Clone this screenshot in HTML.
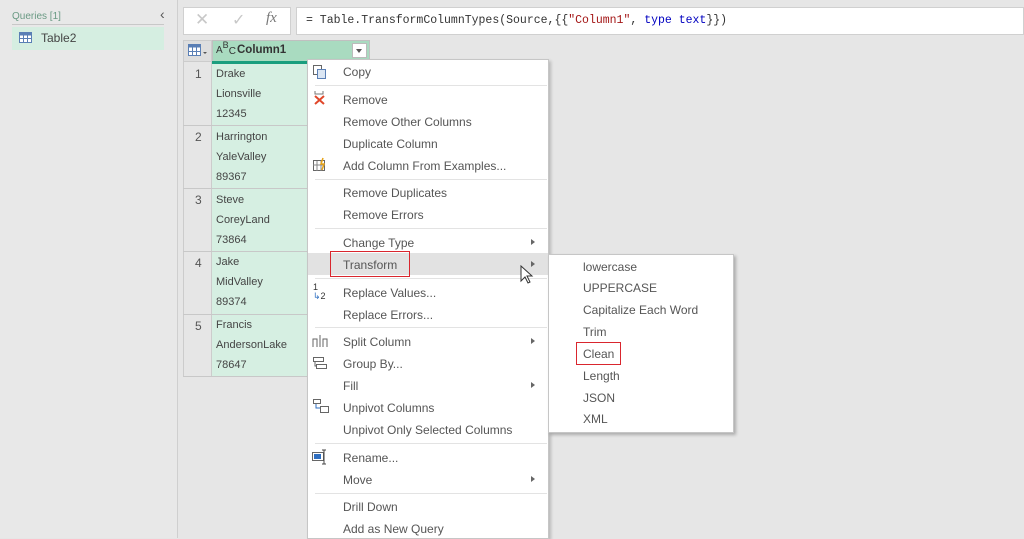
<!DOCTYPE html>
<html><head><style>
*{margin:0;padding:0;box-sizing:border-box}
body{width:1024px;height:538px;overflow:hidden;background:#e6e6e6;font-family:"Liberation Sans",sans-serif;font-size:12px;color:#444;position:relative}
.a{position:absolute}
.mi{position:absolute;left:343px;color:#555;font-size:12px;line-height:14px}
.sep{position:absolute;left:315px;width:232px;height:1px;background:#e3e3e3}
.arr{position:absolute;left:531px;width:0;height:0;border-left:4px solid #666;border-top:3.5px solid transparent;border-bottom:3.5px solid transparent}
.si{position:absolute;left:583px;color:#555;font-size:12px;line-height:14px}
.cell{position:absolute;left:216px;font-size:11px;color:#444}
.idx{position:absolute;left:195px;font-size:12px;color:#555}
</style></head><body>
<!-- left panel -->
<div class="a" style="left:0;top:0;width:178px;height:538px;background:#e8e8e8;border-right:1px solid #cfcfcf"></div>
<div class="a" style="left:12px;top:11px;font-size:10px;color:#6a9a84">Queries [1]</div>
<div class="a" style="left:12px;top:24px;width:152px;height:1px;background:#c8c8c8"></div>
<div class="a" style="left:160px;top:6px;font-size:14px;color:#555">&#8249;</div>
<div class="a" style="left:12px;top:27px;width:152px;height:23px;background:#d5eee1"></div>
<svg class="a" style="left:19px;top:32px" width="13" height="11"><rect x="0.5" y="0.5" width="12" height="10" fill="#fff" stroke="#5a7fb5"/><rect x="0.5" y="0.5" width="12" height="3" fill="#5a7fb5"/><path d="M4.5 3v8M8.5 3v8M0 6.5h13" stroke="#5a7fb5"/></svg>
<div class="a" style="left:41px;top:31px;font-size:12px;color:#444">Table2</div>
<!-- formula bar -->
<div class="a" style="left:183px;top:7px;width:108px;height:28px;background:#fff;border:1px solid #d0d0d0"></div>
<div class="a" style="left:195px;top:10px;font-size:17px;color:#c8c8c8">&#10005;</div>
<div class="a" style="left:232px;top:10px;font-size:16px;color:#c8c8c8">&#10003;</div>
<div class="a" style="left:266px;top:10px;font-size:15px;color:#777;font-family:'Liberation Serif',serif;font-style:italic">fx</div>
<div class="a" style="left:296px;top:7px;width:728px;height:28px;background:#fff;border:1px solid #d0d0d0"></div>
<div class="a" style="left:306px;top:14px;font-family:'Liberation Mono',monospace;font-size:11.5px;color:#333">= Table.TransformColumnTypes(Source,{{<span style="color:#a31515">"Column1"</span>, <span style="color:#0000c0">type text</span>}})</div>
<!-- table header -->
<div class="a" style="left:183px;top:40px;width:29px;height:22px;background:#dedede;border:1px solid #ccc"></div>
<svg class="a" style="left:188px;top:44px" width="22" height="13"><rect x="0.5" y="0.5" width="12" height="11" fill="#fff" stroke="#5a7fb5"/><rect x="0.5" y="0.5" width="12" height="3" fill="#5a7fb5"/><path d="M4.5 3v9M8.5 3v9M0 7.5h13" stroke="#5a7fb5"/><path d="M15 8l2 2 2-2z" fill="#555"/></svg>
<div class="a" style="left:212px;top:40px;width:158px;height:22px;background:#a9dbc0;border:1px solid #c0c0c0"></div>
<div class="a" style="left:216px;top:41px;font-size:10px;color:#333"><span style="position:relative;top:4px">A</span><span style="position:relative;top:-1px;font-size:9px">B</span><span style="position:relative;top:5px">C</span></div>
<div class="a" style="left:237px;top:44px;font-weight:bold;font-size:11.5px;color:#333">Column1</div>
<div class="a" style="left:352px;top:43px;width:15px;height:15px;background:#fff;border:1px solid #bbb"></div>
<div class="a" style="left:356px;top:49px;border-top:4px solid #555;border-left:3.5px solid transparent;border-right:3.5px solid transparent"></div>
<div class="a" style="left:212px;top:61px;width:97px;height:3px;background:#1a9e7e"></div>
<!-- table body -->
<div class="a" style="left:183px;top:62px;width:29px;height:315px;background:#e6e6e6;border-left:1px solid #ccc;border-right:1px solid #ccc"></div>
<div class="a" style="left:212px;top:64px;width:97px;height:313px;background:#d6efe2;border-bottom:1px solid #ccc"></div>
<div class="a" style="left:183px;top:125px;width:126px;height:1px;background:#c8c8c8"></div>
<div class="a" style="left:183px;top:188px;width:126px;height:1px;background:#c8c8c8"></div>
<div class="a" style="left:183px;top:251px;width:126px;height:1px;background:#c8c8c8"></div>
<div class="a" style="left:183px;top:314px;width:126px;height:1px;background:#c8c8c8"></div>
<div class="a" style="left:183px;top:376px;width:126px;height:1px;background:#c8c8c8"></div>
<div class="idx" style="top:67px">1</div><div class="cell" style="top:68px">Drake</div><div class="cell" style="top:88px">Lionsville</div><div class="cell" style="top:108px">12345</div>
<div class="idx" style="top:130px">2</div><div class="cell" style="top:131px">Harrington</div><div class="cell" style="top:151px">YaleValley</div><div class="cell" style="top:171px">89367</div>
<div class="idx" style="top:193px">3</div><div class="cell" style="top:194px">Steve</div><div class="cell" style="top:214px">CoreyLand</div><div class="cell" style="top:234px">73864</div>
<div class="idx" style="top:256px">4</div><div class="cell" style="top:256px">Jake</div><div class="cell" style="top:276px">MidValley</div><div class="cell" style="top:296px">89374</div>
<div class="idx" style="top:319px">5</div><div class="cell" style="top:319px">Francis</div><div class="cell" style="top:339px">AndersonLake</div><div class="cell" style="top:359px">78647</div>
<!-- menu -->
<div class="a" style="left:307px;top:59px;width:242px;height:480px;background:#fff;border:1px solid #c6c6c6;box-shadow:2px 2px 3px rgba(0,0,0,.2)"></div>
<div class="a" style="left:308px;top:253px;width:240px;height:22px;background:#e2e2e2"></div>
<div class="a" style="left:330px;top:251px;width:80px;height:26px;border:1.5px solid #d9262e"></div>
<div class="sep" style="top:85px"></div><div class="sep" style="top:179px"></div><div class="sep" style="top:228px"></div><div class="sep" style="top:278px"></div><div class="sep" style="top:327px"></div><div class="sep" style="top:443px"></div><div class="sep" style="top:493px"></div>
<div class="mi" style="top:65px">Copy</div>
<div class="mi" style="top:93px">Remove</div>
<div class="mi" style="top:115px">Remove Other Columns</div>
<div class="mi" style="top:137px">Duplicate Column</div>
<div class="mi" style="top:159px">Add Column From Examples...</div>
<div class="mi" style="top:186px">Remove Duplicates</div>
<div class="mi" style="top:208px">Remove Errors</div>
<div class="mi" style="top:236px">Change Type</div>
<div class="mi" style="top:258px">Transform</div>
<div class="mi" style="top:286px">Replace Values...</div>
<div class="mi" style="top:308px">Replace Errors...</div>
<div class="mi" style="top:335px">Split Column</div>
<div class="mi" style="top:357px">Group By...</div>
<div class="mi" style="top:379px">Fill</div>
<div class="mi" style="top:401px">Unpivot Columns</div>
<div class="mi" style="top:423px">Unpivot Only Selected Columns</div>
<div class="mi" style="top:451px">Rename...</div>
<div class="mi" style="top:473px">Move</div>
<div class="mi" style="top:500px">Drill Down</div>
<div class="mi" style="top:522px">Add as New Query</div>
<div class="arr" style="top:239px"></div><div class="arr" style="top:261px"></div><div class="arr" style="top:338px"></div><div class="arr" style="top:382px"></div><div class="arr" style="top:476px"></div>
<!-- menu icons -->
<svg class="a" style="left:312px;top:64px" width="16" height="16"><rect x="1.5" y="1.5" width="8" height="9" fill="#fff" stroke="#666"/><rect x="5.5" y="5.5" width="8" height="9" fill="#dbe6f3" stroke="#5a7fb5"/></svg>
<svg class="a" style="left:312px;top:90px" width="16" height="16"><path d="M3 1v3h8V1" stroke="#777" fill="none"/><path d="M3 6l9 8M12 6l-9 8" stroke="#e0472a" stroke-width="2"/></svg>
<svg class="a" style="left:312px;top:157px" width="16" height="16"><rect x="1.5" y="3.5" width="11" height="10" fill="#fff" stroke="#666"/><path d="M1 8h12M5 4v10M9 4v10" stroke="#888"/><path d="M11 1l-2 6h3l-2 6" stroke="#e8a317" stroke-width="1.5" fill="none"/></svg>
<div class="a" style="left:313px;top:283px;font-size:9px;color:#333;line-height:9px">1<br><span style="color:#2f6fc0">&#8627;</span>2</div>
<svg class="a" style="left:311px;top:333px" width="18" height="16"><path d="M2 14V6h4v8M9 14V2M12 14V6h4v8" stroke="#666" fill="none"/></svg>
<svg class="a" style="left:312px;top:355px" width="16" height="16"><rect x="1.5" y="2.5" width="10" height="4" fill="none" stroke="#666"/><rect x="4.5" y="9.5" width="10" height="4" fill="none" stroke="#666"/><path d="M3 7v4h2" stroke="#666" fill="none"/></svg>
<svg class="a" style="left:312px;top:398px" width="18" height="16"><rect x="1.5" y="1.5" width="7" height="4" fill="#fff" stroke="#666"/><path d="M4 6v4h4" stroke="#2f6fc0" fill="none"/><rect x="8.5" y="8.5" width="8" height="6" fill="#fff" stroke="#666"/></svg>
<svg class="a" style="left:311px;top:449px" width="18" height="16"><rect x="1.5" y="3.5" width="11" height="8" fill="#fff" stroke="#666"/><rect x="3" y="5" width="7" height="5" fill="#2f6fc0"/><path d="M13 1v14M11 1h4M11 15h4" stroke="#444"/></svg>
<!-- cursor -->
<svg class="a" style="left:520px;top:265px" width="14" height="20"><path d="M1 1v15l4-4 3 6 2-1-3-6h5z" fill="#fff" stroke="#333"/></svg>
<!-- submenu -->
<div class="a" style="left:548px;top:254px;width:186px;height:179px;background:#fff;border:1px solid #c6c6c6;box-shadow:2px 2px 3px rgba(0,0,0,.25)"></div>
<div class="a" style="left:576px;top:342px;width:45px;height:23px;border:1.5px solid #d9262e"></div>
<div class="si" style="top:260px">lowercase</div>
<div class="si" style="top:281px">UPPERCASE</div>
<div class="si" style="top:303px">Capitalize Each Word</div>
<div class="si" style="top:325px">Trim</div>
<div class="si" style="top:347px">Clean</div>
<div class="si" style="top:369px">Length</div>
<div class="si" style="top:391px">JSON</div>
<div class="si" style="top:412px">XML</div>
</body></html>
